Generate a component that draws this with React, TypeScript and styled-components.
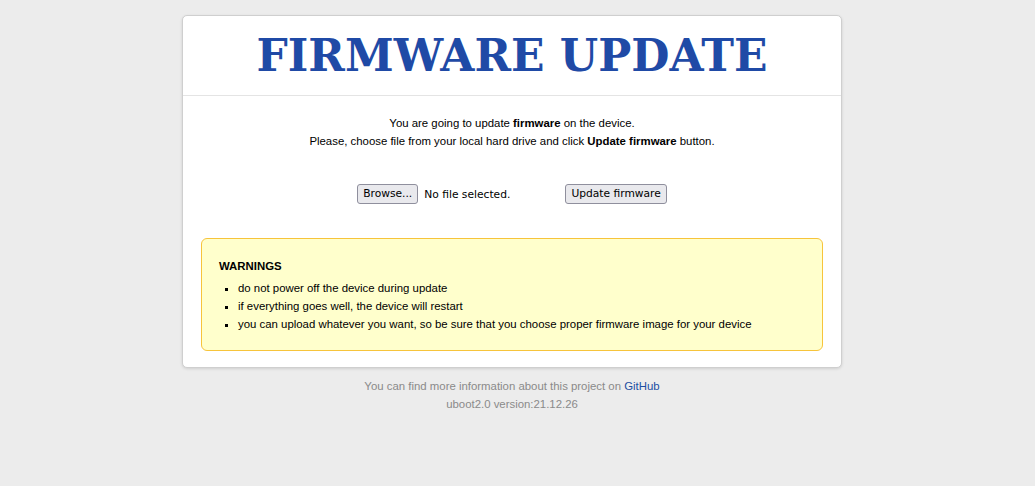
import React from 'react';
import styled, { createGlobalStyle } from 'styled-components';

const GlobalStyle = createGlobalStyle`
  html, body {
    margin: 0;
    padding: 0;
    background: #ececec;
  }
  body {
    font-family: "Liberation Sans", Arial, sans-serif;
    font-size: 11.4px;
    color: #000;
  }
`;

const Page = styled.div`
  width: 1024px;
  padding: 15px 0 40px;
  box-sizing: border-box;
`;

const Card = styled.div`
  width: 660px;
  margin: 0 auto;
  box-sizing: border-box;
  background: #fff;
  border: 1px solid #cfcfcf;
  border-radius: 5px;
  box-shadow: 0 1px 3px rgba(0, 0, 0, 0.12);
  padding-bottom: 16px;
`;

const Header = styled.div`
  height: 79px;
  border-bottom: 1px solid #e4e4e4;
  display: flex;
  align-items: center;
  justify-content: center;
`;

const Title = styled.h1`
  margin: 0;
  font-family: "DejaVu Serif", "Liberation Serif", serif;
  font-weight: bold;
  font-size: 44px;
  color: #1f4aa6;
`;

const Intro = styled.div`
  padding-top: 18px;
  text-align: center;
  line-height: 18px;
`;

const Form = styled.div`
  display: flex;
  justify-content: center;
  align-items: center;
  margin-top: 34px;
  font-family: "DejaVu Sans", sans-serif;
  font-size: 10.7px;
`;

const NativeButton = styled.button`
  font-family: "DejaVu Sans", sans-serif;
  font-size: 10.7px;
  color: #000;
  background: #e9e9ed;
  border: 1px solid #8f8f9d;
  border-radius: 3px;
  height: 20px;
  padding: 0 5px;
  line-height: 18px;
`;

const FileName = styled.span`
  margin: 0 55px 0 6px;
`;

const Warnings = styled.div`
  margin: 34px 18px 0 18px;
  background: #ffffcc;
  border: 1px solid #f7c43b;
  border-radius: 6px;
  padding: 19px 17px 17px;
`;

const WarningsTitle = styled.div`
  font-weight: bold;
  line-height: 16px;
`;

const List = styled.ul`
  margin: 5px 0 0;
  padding-left: 19px;
  list-style: square;
  line-height: 18px;
`;

const Footer = styled.div`
  text-align: center;
  color: #8a8a8a;
  line-height: 18px;
  padding-top: 9px;
`;

const Link = styled.a`
  color: #1d4fa3;
  text-decoration: none;
`;

export default function App() {
  return (
    <>
      <GlobalStyle />
      <Page>
        <Card>
          <Header>
            <Title>FIRMWARE UPDATE</Title>
          </Header>
          <Intro>
            You are going to update <b>firmware</b> on the device.
            <br />
            Please, choose file from your local hard drive and click{' '}
            <b>Update firmware</b> button.
          </Intro>
          <Form>
            <NativeButton type="button">Browse...</NativeButton>
            <FileName>No file selected.</FileName>
            <NativeButton type="button">Update firmware</NativeButton>
          </Form>
          <Warnings>
            <WarningsTitle>WARNINGS</WarningsTitle>
            <List>
              <li>do not power off the device during update</li>
              <li>if everything goes well, the device will restart</li>
              <li>
                you can upload whatever you want, so be sure that you choose
                proper firmware image for your device
              </li>
            </List>
          </Warnings>
        </Card>
        <Footer>
          You can find more information about this project on{' '}
          <Link href="#">GitHub</Link>
          <br />
          uboot2.0 version:21.12.26
        </Footer>
      </Page>
    </>
  );
}
